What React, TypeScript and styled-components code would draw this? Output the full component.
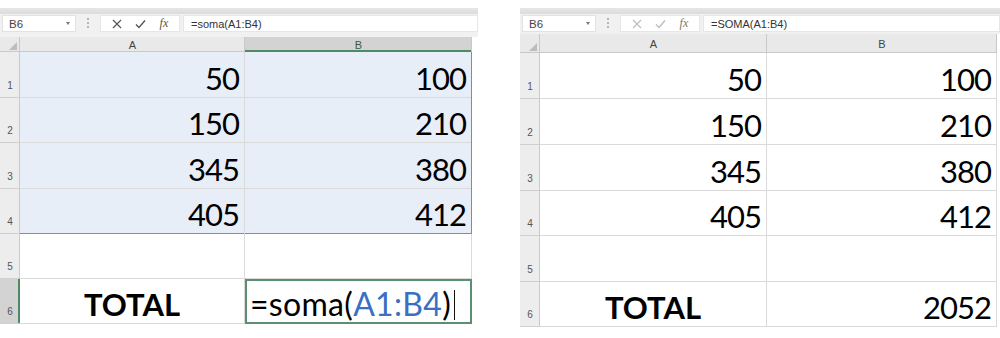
import React from "react";
import styled, { createGlobalStyle } from "styled-components";

type CellData = {
  text?: React.ReactNode;
  align?: "left" | "center" | "right";
  bold?: boolean;
  sel?: boolean;
  rEdge?: boolean;
  bEdge?: boolean;
  active?: boolean;
};

type SheetProps = {
  left: number;
  width: number;
  nameBox: string;
  formula: string;
  editing: boolean;
  barH: number;
  headH: number;
  colW: number[];
  rowH: number[];
  selCol?: number;
  selRow?: number;
  rows: CellData[][];
};

const GlobalStyle = createGlobalStyle`
  html, body { margin: 0; padding: 0; background: #fff; }
  body { font-family: "Liberation Sans", Arial, sans-serif; }
`;

const Page = styled.div`
  display: flex;
  align-items: flex-start;
  width: 1000px;
  height: 338px;
  overflow: hidden;
  background: #fff;
`;

const Panel = styled.div<{ $w: number; $ml: number }>`
  width: ${(p) => p.$w}px;
  margin-left: ${(p) => p.$ml}px;
  display: flex;
  flex-direction: column;
  padding-top: 8px;
`;

const Ribbon = styled.div`
  height: 6px;
  background: linear-gradient(#e6e6e6, #dcdcdc);
`;

const FormulaBar = styled.div<{ $h: number }>`
  height: ${(p) => p.$h}px;
  background: #f1f1f1;
  display: flex;
  align-items: flex-start;
  padding-top: 1px;
  box-sizing: border-box;
`;

const NameBox = styled.div`
  width: 74px;
  height: 17px;
  margin-left: 2px;
  background: #fff;
  border: 1px solid #e2e2e2;
  box-sizing: border-box;
  display: flex;
  align-items: center;
  justify-content: space-between;
  padding: 0 5px 0 6px;
  font-size: 11.5px;
  color: #444;
`;

const Caret = styled.span`
  width: 0;
  height: 0;
  border-left: 2.5px solid transparent;
  border-right: 2.5px solid transparent;
  border-top: 3px solid #777;
`;

const Grip = styled.span`
  width: 0;
  height: 10px;
  margin: 3px 11px 0 11px;
  border-left: 2px dotted #b5b5b5;
`;

const IconBox = styled.div`
  width: 80px;
  height: 17px;
  background: #fff;
  border: 1px solid #e6e6e6;
  box-sizing: border-box;
  display: flex;
  align-items: center;
  justify-content: space-around;
  padding: 0 4px;
`;

const FxText = styled.span<{ $dim: boolean }>`
  font-family: "Liberation Serif", "Times New Roman", serif;
  font-style: italic;
  font-size: 12px;
  color: ${(p) => (p.$dim ? "#777" : "#555")};
`;

const Input = styled.div`
  flex: 1;
  height: 17px;
  margin-left: 3px;
  background: #fff;
  border: 1px solid #e6e6e6;
  box-sizing: border-box;
  display: flex;
  align-items: center;
  padding-left: 7px;
  font-size: 11px;
  color: #333;
`;

const Row = styled.div<{ $h: number }>`
  display: flex;
  height: ${(p) => p.$h}px;
`;

const Corner = styled.div`
  width: 20px;
  flex: none;
  background: #e9e9e9;
  box-shadow: inset -1px -1px 0 #c9c9c9;
  display: flex;
  align-items: flex-end;
  justify-content: flex-end;
  padding: 0 3px 2px 0;
  box-sizing: border-box;
`;

const CornerMark = styled.span`
  width: 0;
  height: 0;
  border-left: 8px solid transparent;
  border-bottom: 8px solid #bdbdbd;
`;

const ColHead = styled.div<{ $w: number; $sel: boolean }>`
  width: ${(p) => p.$w}px;
  flex: none;
  background: ${(p) => (p.$sel ? "#d3d3d3" : "#e9e9e9")};
  box-shadow: inset -1px 0 0 #c9c9c9,
    inset 0 ${(p) => (p.$sel ? "-2px 0 #4f8a62" : "-1px 0 #c9c9c9")};
  display: flex;
  align-items: center;
  justify-content: center;
  font-size: 11px;
  color: ${(p) => (p.$sel ? "#3a5a44" : "#444")};
`;

const RowHead = styled.div<{ $sel: boolean }>`
  width: 20px;
  flex: none;
  background: ${(p) => (p.$sel ? "#d3d3d3" : "#ededed")};
  box-shadow: inset 0 -1px 0 #d0d0d0,
    inset ${(p) => (p.$sel ? "-2px 0 0 #4f8a62" : "-1px 0 0 #c9c9c9")};
  display: flex;
  align-items: flex-end;
  justify-content: center;
  padding-bottom: 7px;
  box-sizing: border-box;
  font-size: 10px;
  color: #555;
`;

const Cell = styled.div<{
  $w: number;
  $align: string;
  $bold: boolean;
  $sel: boolean;
  $rEdge: boolean;
  $bEdge: boolean;
  $active: boolean;
}>`
  width: ${(p) => p.$w}px;
  flex: none;
  box-sizing: border-box;
  background: ${(p) => (p.$sel ? "#e8eef8" : "#fff")};
  box-shadow: ${(p) =>
    p.$active
      ? "inset 0 0 0 2px #5a9070"
      : [
          `inset ${p.$rEdge ? "-1px 0 0 #6b8fc9" : "-1px 0 0 #dadada"}`,
          `inset 0 ${p.$bEdge ? "-1px 0 #6b8fc9" : "-1px 0 #dadada"}`,
        ].join(", ")};
  display: flex;
  align-items: flex-end;
  justify-content: ${(p) =>
    p.$align === "right" ? "flex-end" : p.$align === "center" ? "center" : "flex-start"};
  padding: 0 6px 4px 5px;
  font-family: Lato, "Open Sans", sans-serif;
  font-size: ${(p) => (p.$active ? "32px" : "31px")};
  line-height: 1;
  font-weight: ${(p) => (p.$bold ? 700 : 400)};
  letter-spacing: ${(p) => (p.$bold ? "0" : p.$active ? "0.3px" : "-1px")};
  color: #000;
`;

const Ref = styled.span`
  color: #3b6fc2;
`;

const Cursor = styled.span`
  display: inline-block;
  width: 0;
  height: 30px;
  margin-left: 3px;
  border-left: 1.5px solid #111;
  vertical-align: bottom;
`;

const CrossIcon = ({ c }: { c: string }) => (
  <svg width="10" height="10" viewBox="0 0 10 10">
    <path d="M1 1 L9 9 M9 1 L1 9" stroke={c} strokeWidth="1.2" fill="none" />
  </svg>
);

const CheckIcon = ({ c }: { c: string }) => (
  <svg width="11" height="10" viewBox="0 0 11 10">
    <path d="M1 5.5 L4 8.5 L10 1.5" stroke={c} strokeWidth="1.4" fill="none" />
  </svg>
);

const Sheet = (props: SheetProps) => {
  const iconColor = props.editing ? "#555" : "#bdbdbd";
  return (
    <Panel $w={props.width} $ml={props.left}>
      <Ribbon />
      <FormulaBar $h={props.barH}>
        <NameBox>
          <span>{props.nameBox}</span>
          <Caret />
        </NameBox>
        <Grip />
        <IconBox>
          <CrossIcon c={iconColor} />
          <CheckIcon c={iconColor} />
          <FxText $dim={!props.editing}>fx</FxText>
        </IconBox>
        <Input>{props.formula}</Input>
      </FormulaBar>
      <Row $h={props.headH}>
        <Corner>
          <CornerMark />
        </Corner>
        {["A", "B"].map((c, i) => (
          <ColHead key={c} $w={props.colW[i]} $sel={props.selCol === i}>
            {c}
          </ColHead>
        ))}
      </Row>
      {props.rows.map((r, ri) => (
        <Row key={`row_${ri}`} $h={props.rowH[ri]}>
          <RowHead $sel={props.selRow === ri}>{ri + 1}</RowHead>
          {r.map((cell, ci) => (
            <Cell
              key={`cell_${ri}_${ci}`}
              $w={props.colW[ci]}
              $align={cell.align ?? "right"}
              $bold={!!cell.bold}
              $sel={!!cell.sel}
              $rEdge={!!cell.rEdge}
              $bEdge={!!cell.bEdge}
              $active={!!cell.active}
            >
              {cell.text}
            </Cell>
          ))}
        </Row>
      ))}
    </Panel>
  );
};

const values = [
  ["50", "100"],
  ["150", "210"],
  ["345", "380"],
  ["405", "412"],
];

const leftRows: CellData[][] = [
  ...values.map((r, ri) =>
    r.map((v, ci) => ({
      text: v,
      sel: true,
      rEdge: ci === 1,
      bEdge: ri === 3,
    }))
  ),
  [{}, {}],
  [
    { text: "TOTAL", bold: true, align: "center" },
    {
      text: (
        <span>
          =soma(<Ref>A1:B4</Ref>)<Cursor />
        </span>
      ),
      align: "left",
      active: true,
    },
  ],
];

const rightRows: CellData[][] = [
  ...values.map((r) => r.map((v) => ({ text: v }))),
  [{}, {}],
  [{ text: "TOTAL", bold: true, align: "center" }, { text: "2052" }],
];

export default function App() {
  return (
    <>
      <GlobalStyle />
      <Page>
        <Sheet
          left={0}
          width={478}
          nameBox="B6"
          formula="=soma(A1:B4)"
          editing
          barH={23}
          headH={15}
          colW={[225, 227]}
          rowH={[46, 45, 46, 45, 45, 45]}
          selCol={1}
          selRow={5}
          rows={leftRows}
        />
        <Sheet
          left={42}
          width={480}
          nameBox="B6"
          formula="=SOMA(A1:B4)"
          editing={false}
          barH={20}
          headH={19}
          colW={[227, 230]}
          rowH={[46, 46, 46, 45, 46, 45]}
          rows={rightRows}
        />
      </Page>
    </>
  );
}
